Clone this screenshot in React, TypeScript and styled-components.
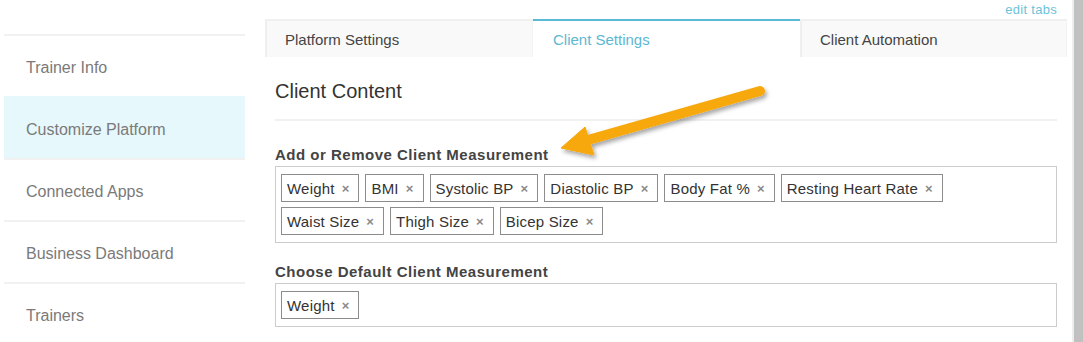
import React from 'react';
import styled, { createGlobalStyle } from 'styled-components';

const GlobalStyle = createGlobalStyle`
  html, body {
    margin: 0;
    padding: 0;
    background: #ffffff;
    font-family: "Liberation Sans", Arial, Helvetica, sans-serif;
  }
`;

const Page = styled.div`
  position: relative;
  display: flex;
  width: 1083px;
  height: 342px;
  overflow: hidden;
  background: #fff;
`;

const Sidebar = styled.nav`
  width: 241px;
  margin-left: 4px;
  padding-top: 34px;
  flex-shrink: 0;
`;

const NavItem = styled.div<{ $active?: boolean }>`
  box-sizing: border-box;
  height: 62px;
  display: flex;
  align-items: center;
  padding: 3px 0 0 22px;
  border-top: 2px solid ${(p) => (p.$active ? '#e6f8fb' : '#f1f1f1')};
  background: ${(p) => (p.$active ? '#e6f8fb' : 'transparent')};
  color: #7a7a7a;
  font-size: 16px;
`;

const Main = styled.main`
  width: 802px;
  margin-left: 20px;
  flex-shrink: 0;
`;

const TopBar = styled.div`
  height: 19px;
  display: flex;
  justify-content: flex-end;
  align-items: center;
  padding-right: 10px;
  font-size: 13px;
  letter-spacing: 0.3px;
  color: #6cc3da;
`;

const Tabs = styled.div`
  display: grid;
  grid-template-columns: 268px 267px 267px;
  height: 38px;
`;

const Tab = styled.div<{ $active?: boolean }>`
  display: flex;
  align-items: center;
  padding-left: ${(p) => (p.$active ? '20px' : '18px')};
  font-size: 15px;
  color: ${(p) => (p.$active ? '#5bb8d3' : '#444')};
  background: ${(p) => (p.$active ? '#ffffff' : '#f9f9f9')};
  border-top: ${(p) => (p.$active ? '2px solid #5ab9d3' : '2px solid #f0f0f0')};
  border-left: ${(p) => (p.$active ? 'none' : '2px solid #efefef')};
  border-right: ${(p) => (p.$active ? 'none' : '1px solid #f3f3f3')};
  box-sizing: border-box;
`;

const Content = styled.section`
  padding: 0 10px;
`;

const Title = styled.h2`
  margin: 0;
  padding: 23px 0 17px;
  line-height: 22px;
  font-size: 20px;
  font-weight: normal;
  color: #333;
  border-bottom: 2px solid #f1f1f1;
`;

const Label = styled.div<{ $top: number }>`
  margin-top: ${(p) => p.$top}px;
  line-height: 18px;
  font-size: 15px;
  letter-spacing: 0.5px;
  font-weight: bold;
  color: #444;
`;

const TagBox = styled.div`
  margin-top: 2px;
  border: 1px solid #cccccc;
  padding: 7px 100px 7px 5px;
  display: flex;
  flex-wrap: wrap;
  gap: 5px 6px;
`;

const Tag = styled.span`
  display: inline-flex;
  align-items: center;
  height: 28px;
  box-sizing: border-box;
  border: 1px solid #8c8c8c;
  padding: 0 9px 0 5px;
  font-size: 15px;
  letter-spacing: 0.2px;
  color: #333;
`;

const Remove = styled.span`
  margin-left: 7px;
  font-size: 13px;
  font-weight: bold;
  color: #8a8a8a;
`;

const Scrollbar = styled.div`
  margin-left: auto;
  width: 9px;
  border-left: 2px solid #eeeeee;
  background: #c1c1c1;
`;

const ArrowLayer = styled.svg`
  position: absolute;
  left: 0;
  top: 0;
  pointer-events: none;
`;

const navItems = ['Trainer Info', 'Customize Platform', 'Connected Apps', 'Business Dashboard', 'Trainers'];
const measurements = [
  'Weight',
  'BMI',
  'Systolic BP',
  'Diastolic BP',
  'Body Fat %',
  'Resting Heart Rate',
  'Waist Size',
  'Thigh Size',
  'Bicep Size',
];

const Arrow = () => (
  <ArrowLayer width="1083" height="342" viewBox="0 0 1083 342">
    <defs>
      <filter id="shadow" x="-20%" y="-50%" width="140%" height="200%">
        <feDropShadow dx="2" dy="3" stdDeviation="2" floodColor="#000" floodOpacity="0.35" />
      </filter>
    </defs>
    <g filter="url(#shadow)" fill="#f7a80c" stroke="#f7a80c">
      <line x1="760" y1="91" x2="588" y2="140" strokeWidth="10" strokeLinecap="round" />
      <polygon points="561,148 585,127 594,155" strokeWidth="1" strokeLinejoin="round" />
    </g>
  </ArrowLayer>
);

export default function App() {
  return (
    <>
      <GlobalStyle />
      <Page>
        <Sidebar>
          {navItems.map((item) => (
            <NavItem key={item} $active={item === 'Customize Platform'}>
              {item}
            </NavItem>
          ))}
        </Sidebar>
        <Main>
          <TopBar>edit tabs</TopBar>
          <Tabs>
            <Tab>Platform Settings</Tab>
            <Tab $active>Client Settings</Tab>
            <Tab>Client Automation</Tab>
          </Tabs>
          <Content>
            <Title>Client Content</Title>
            <Label $top={25}>Add or Remove Client Measurement</Label>
            <TagBox>
              {measurements.map((m) => (
                <Tag key={m}>
                  {m}
                  <Remove>×</Remove>
                </Tag>
              ))}
            </TagBox>
            <Label $top={20}>Choose Default Client Measurement</Label>
            <TagBox>
              <Tag>
                Weight
                <Remove>×</Remove>
              </Tag>
            </TagBox>
          </Content>
        </Main>
        <Scrollbar />
        <Arrow />
      </Page>
    </>
  );
}
